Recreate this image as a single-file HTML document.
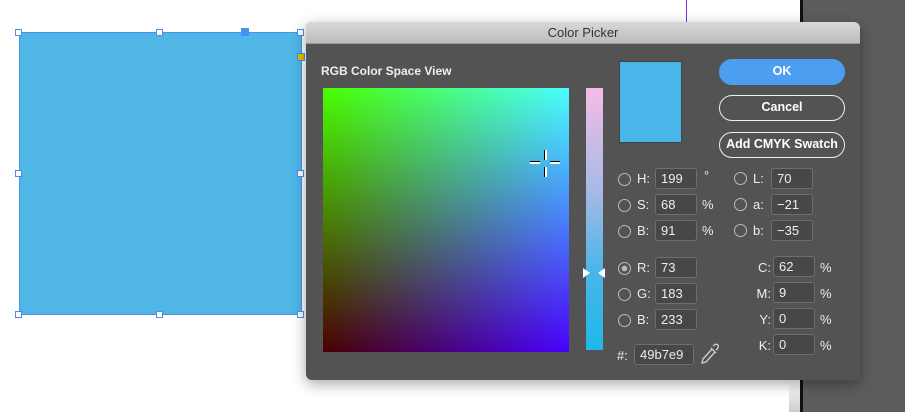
<!DOCTYPE html>
<html><head><style>
*{margin:0;padding:0;box-sizing:border-box}
body{width:905px;height:412px;position:relative;overflow:hidden;background:#fff;font-family:"Liberation Sans",sans-serif}
.a{position:absolute}
.h{position:absolute;width:7px;height:7px;background:#fff;border:1px solid #4a8ff0}
.dlg{left:306px;top:22px;width:554px;height:358px;background:#535353;border-radius:6px;overflow:hidden;box-shadow:0 4px 14px rgba(0,0,0,.35)}
.title{left:0;top:0;width:554px;height:22px;background:linear-gradient(#d8d8d8,#bdbdbd);border-bottom:1px solid #999;text-align:center;font-size:13px;line-height:22px;color:#333}
.t{position:absolute;color:#eee;font-size:13px;line-height:21px}
.in{position:absolute;height:21px;background:#474747;border:1px solid #6e6e6e;border-radius:3px;color:#eee;font-size:13px;line-height:19px;padding-left:5px}
.r{position:absolute;width:13px;height:13px;border:1.5px solid #bbb;border-radius:50%}
.btn{position:absolute;left:413px;width:126px;height:26px;border:1.5px solid #eee;border-radius:13px;color:#fff;font-size:12.5px;font-weight:bold;text-align:center;line-height:23px}
</style></head><body>
<div class="a" style="left:686px;top:0;width:1px;height:22px;background:#8a2be2"></div>
<div class="a" style="left:800px;top:0;width:3px;height:412px;background:#111"></div>
<div class="a" style="left:803px;top:0;width:102px;height:412px;background:#5c5c5c"></div>
<div class="a" style="left:789px;top:380px;width:11px;height:32px;background:linear-gradient(#fff,#ccc)"></div>
<div class="a" style="left:19px;top:32px;width:283px;height:283px;background:#4fb6e6;border:1px solid #4a8ff0"></div>
<div class="h" style="left:15px;top:29px"></div><div class="h" style="left:156px;top:29px"></div><div class="h" style="left:297px;top:29px"></div>
<div class="h" style="left:15px;top:170px"></div><div class="h" style="left:297px;top:170px"></div>
<div class="h" style="left:15px;top:311px"></div><div class="h" style="left:156px;top:311px"></div><div class="h" style="left:297px;top:311px"></div>
<div class="a" style="left:241px;top:28px;width:8px;height:8px;background:#4a8ff0"></div>
<div class="a" style="left:297px;top:53px;width:8px;height:8px;background:#e0c000;border:1px solid #4a8ff0"></div>
<div class="a dlg">
<div class="a title">Color Picker</div>
<div class="t" style="left:15px;top:39px;font-size:12px;font-weight:bold">RGB Color Space View</div>
<div class="a" style="left:17px;top:66px;width:246px;height:264px;background:linear-gradient(to right,rgb(73,0,0),rgb(73,0,255))">
<div class="a" style="left:0;top:0;width:246px;height:264px;background:linear-gradient(rgb(0,255,0),rgb(0,0,0));mix-blend-mode:plus-lighter"></div>
</div>
<div class="a" style="left:238px;top:128px;width:3px;height:10px;background:#fff;border-left:1px solid #000"></div>
<div class="a" style="left:238px;top:145px;width:3px;height:10px;background:#fff;border-left:1px solid #000"></div>
<div class="a" style="left:224px;top:139px;width:10px;height:3px;background:#fff;border-top:1px solid #000"></div>
<div class="a" style="left:244px;top:139px;width:10px;height:3px;background:#fff;border-top:1px solid #000"></div>
<div class="a" style="left:280px;top:66px;width:17px;height:262px;background:linear-gradient(#f6bce6,#a5b9e6 40%,#4ab5e8 70%,#1fb8e9)"></div>
<div class="a" style="left:277px;top:246px;width:0;height:0;border-top:5px solid transparent;border-bottom:5px solid transparent;border-left:7px solid #fff"></div>
<div class="a" style="left:292px;top:246px;width:0;height:0;border-top:5px solid transparent;border-bottom:5px solid transparent;border-right:7px solid #fff"></div>
<div class="a" style="left:313px;top:39px;width:63px;height:82px;background:#4ab5e8;border:1px solid #444"></div>
<div class="btn" style="top:37px;background:#4c9ef0;border-color:#4c9ef0">OK</div>
<div class="btn" style="top:73px">Cancel</div>
<div class="btn" style="top:110px">Add CMYK Swatch</div>

<div class="r" style="left:312px;top:151px"></div><div class="t" style="left:331px;top:146px">H:</div><div class="in" style="left:349px;top:146px;width:42px">199</div><div class="t" style="left:398px;top:143px">°</div>
<div class="r" style="left:312px;top:177px"></div><div class="t" style="left:331px;top:172px">S:</div><div class="in" style="left:349px;top:172px;width:42px">68</div><div class="t" style="left:396px;top:172px">%</div>
<div class="r" style="left:312px;top:203px"></div><div class="t" style="left:331px;top:198px">B:</div><div class="in" style="left:349px;top:198px;width:42px">91</div><div class="t" style="left:396px;top:198px">%</div>
<div class="r" style="left:312px;top:240px;background:radial-gradient(#bbb 2.5px,transparent 3px)"></div><div class="t" style="left:331px;top:235px">R:</div><div class="in" style="left:349px;top:235px;width:42px">73</div>
<div class="r" style="left:312px;top:266px"></div><div class="t" style="left:331px;top:261px">G:</div><div class="in" style="left:349px;top:261px;width:42px">183</div>
<div class="r" style="left:312px;top:292px"></div><div class="t" style="left:331px;top:287px">B:</div><div class="in" style="left:349px;top:287px;width:42px">233</div>
<div class="t" style="left:311px;top:323px">#:</div><div class="in" style="left:328px;top:322px;width:60px">49b7e9</div>
<svg class="a" style="left:393px;top:320px" width="20" height="24" viewBox="0 0 20 24"><path d="M3 21 L4 17 L13 7 L16 10 L7 20 Z M12 6 L17 11 M14 4 Q17 1 19 3 Q20 6 17 8" fill="none" stroke="#ccc" stroke-width="1.4"/></svg>

<div class="r" style="left:428px;top:150px"></div><div class="t" style="left:447px;top:146px">L:</div><div class="in" style="left:465px;top:146px;width:42px">70</div>
<div class="r" style="left:428px;top:176px"></div><div class="t" style="left:447px;top:172px">a:</div><div class="in" style="left:465px;top:172px;width:42px">−21</div>
<div class="r" style="left:428px;top:202px"></div><div class="t" style="left:447px;top:198px">b:</div><div class="in" style="left:465px;top:198px;width:42px">−35</div>
<div class="t" style="left:447px;top:235px;width:18px;text-align:right">C:</div><div class="in" style="left:467px;top:234px;width:42px">62</div><div class="t" style="left:514px;top:235px">%</div>
<div class="t" style="left:444px;top:261px;width:21px;text-align:right">M:</div><div class="in" style="left:467px;top:260px;width:42px">9</div><div class="t" style="left:514px;top:261px">%</div>
<div class="t" style="left:447px;top:287px;width:18px;text-align:right">Y:</div><div class="in" style="left:467px;top:286px;width:42px">0</div><div class="t" style="left:514px;top:287px">%</div>
<div class="t" style="left:447px;top:313px;width:18px;text-align:right">K:</div><div class="in" style="left:467px;top:312px;width:42px">0</div><div class="t" style="left:514px;top:313px">%</div>
</div>
</body></html>
